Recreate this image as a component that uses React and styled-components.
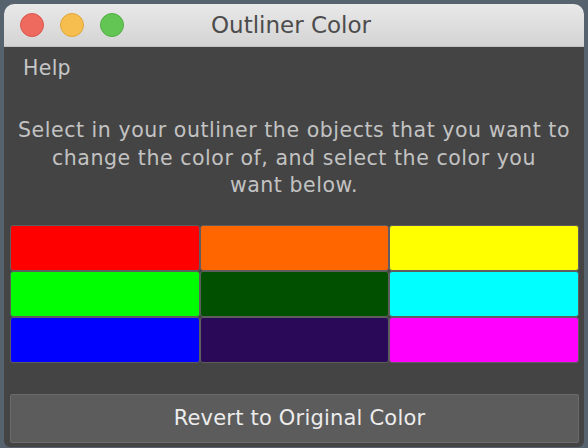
import React from "react";
import styled, { createGlobalStyle } from "styled-components";

const Global = createGlobalStyle`
  html, body { margin: 0; padding: 0; }
  body {
    width: 588px;
    height: 448px;
    overflow: hidden;
    background: #56636f;
  }
`;

const Window = styled.div`
  box-sizing: border-box;
  margin: 4px 0 0 4px;
  width: 580px;
  height: 443px;
  border-radius: 10px 10px 6px 6px;
  background: #444444;
  overflow: hidden;
  display: flex;
  flex-direction: column;
`;

const TitleBar = styled.div`
  height: 43px;
  box-sizing: border-box;
  background: linear-gradient(#e9e9e9, #d4d4d4);
  border-bottom: 1px solid #c2c2c2;
  display: flex;
  align-items: center;
  position: relative;
  padding-left: 16px;
  gap: 16px;
`;

const Light = styled.span`
  width: 24px;
  height: 24px;
  border-radius: 50%;
  box-sizing: border-box;
  background: ${(p) => p.$c};
  border: 1px solid ${(p) => p.$b};
`;

const Title = styled.div`
  position: absolute;
  left: 0;
  right: 0;
  top: 0;
  bottom: 0;
  display: flex;
  align-items: center;
  justify-content: center;
  padding-right: 6px;
  font-family: "DejaVu Sans", sans-serif;
  font-size: 23px;
  color: #4c4c4c;
  pointer-events: none;
`;

const Menu = styled.div`
  padding: 8px 0 0 19px;
  height: 34px;
  box-sizing: border-box;
  font-family: "DejaVu Sans", sans-serif;
  font-size: 20.5px;
  letter-spacing: 0.3px;
  color: #c6c6c6;
  line-height: 26px;
`;

const Body = styled.div`
  display: flex;
  flex-direction: column;
  padding: 0 6px;
`;

const Text = styled.p`
  margin: 36px 0 0;
  text-align: center;
  font-family: "DejaVu Sans", sans-serif;
  font-size: 20.5px;
  letter-spacing: 0.55px;
  line-height: 27.5px;
  color: #c2c2c2;
  white-space: nowrap;
`;

const Grid = styled.div`
  margin-top: 25px;
  display: grid;
  grid-template-columns: repeat(3, 1fr);
  grid-auto-rows: 46px;
  width: 569px;
`;

const Swatch = styled.div`
  box-sizing: border-box;
  border: 1px solid #5e5e5e;
  border-radius: 3px;
  background: ${(p) => p.$c};
`;

const Button = styled.button`
  margin-top: 31px;
  height: 49px;
  width: 569px;
  box-sizing: border-box;
  background: #5c5c5c;
  border: 1px solid #6b6b6b;
  border-radius: 2px;
  color: #ececec;
  font-family: "DejaVu Sans", sans-serif;
  font-size: 21px;
  letter-spacing: 0.2px;
  padding: 0 0 0 10px;
`;

const colors = [
  "#ff0000", "#ff6600", "#ffff00",
  "#00ff00", "#005000", "#00ffff",
  "#0000ff", "#2a0a58", "#ff00ff",
];

export default function App() {
  return (
    <>
      <Global />
      <Window>
        <TitleBar>
          <Light $c="#ee6a5f" $b="#d9574c" />
          <Light $c="#f5be4f" $b="#dea63c" />
          <Light $c="#62c554" $b="#52ad43" />
          <Title>Outliner Color</Title>
        </TitleBar>
        <Menu>Help</Menu>
        <Body>
          <Text>
            Select in your outliner the objects that you want to
            <br />
            change the color of, and select the color you
            <br />
            want below.
          </Text>
          <Grid>
            {colors.map((c) => (
              <Swatch key={c} $c={c} />
            ))}
          </Grid>
          <Button>Revert to Original Color</Button>
        </Body>
      </Window>
    </>
  );
}
